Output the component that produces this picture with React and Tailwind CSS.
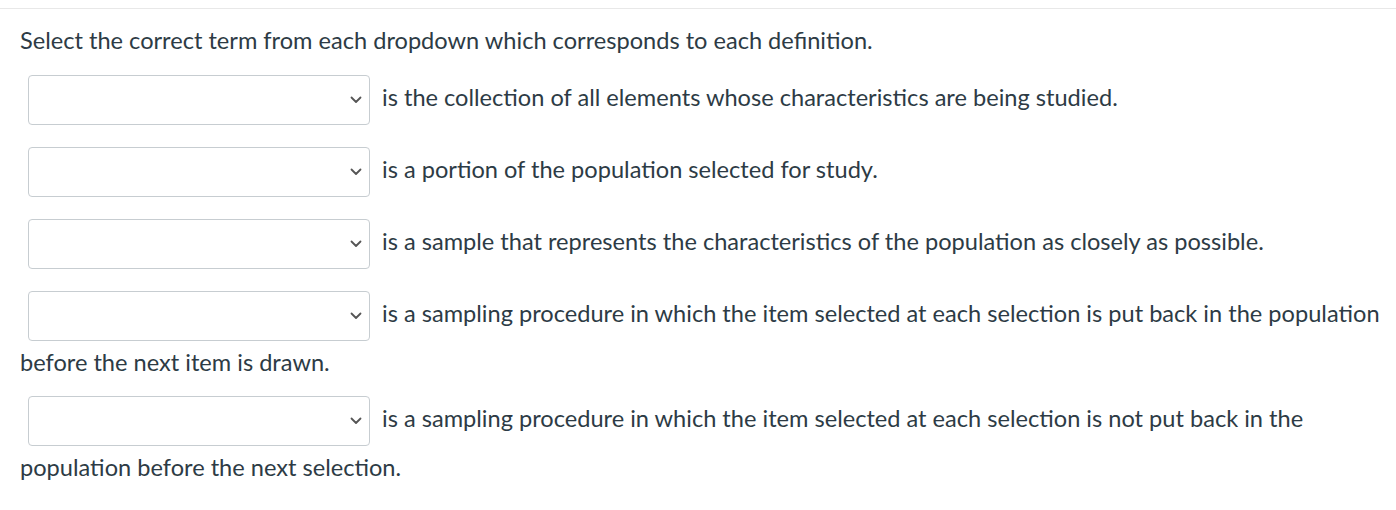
import React from 'react';

const rows = [
    'is the collection of all elements whose characteristics are being studied.',
    'is a portion of the population selected for study.',
    'is a sample that represents the characteristics of the population as closely as possible.',
    'is a sampling procedure in which the item selected at each selection is put back in the population before the next item is drawn.',
    'is a sampling procedure in which the item selected at each selection is not put back in the population before the next selection.',
];

const Dropdown = () => (
    <span className="relative inline-block align-middle my-[5px] ml-2 mr-3">
        <select
            defaultValue=""
            className="block w-[342px] h-[50px] appearance-none bg-white border border-[#c7cdd1] rounded-[4px] pl-3 pr-8 text-[#2d3b45] outline-none"
        >
            <option value=""></option>
            <option value="population">population</option>
            <option value="sample">sample</option>
            <option value="representative">representative sample</option>
            <option value="with">sampling with replacement</option>
            <option value="without">sampling without replacement</option>
        </select>
        <svg
            className="pointer-events-none absolute right-[8px] top-1/2 -translate-y-1/2"
            width="12"
            height="8"
            viewBox="0 0 12 8"
            fill="none"
        >
            <path d="M1.5 1.5 L6 6 L10.5 1.5" stroke="#555" strokeWidth="1.8" strokeLinecap="round" strokeLinejoin="round" />
        </svg>
    </span>
);

const App = () => {
    return (
        <div className="min-h-screen bg-white pt-2 font-['Lato','Open_Sans',sans-serif] text-[#2d3b45]">
            <div className="border-t border-[#e8e8e8] pl-5 pr-0 pt-[15px] text-[23.6px] leading-[33px]">
                <p className="mb-[13px]">Select the correct term from each dropdown which corresponds to each definition.</p>
                {rows.map((text, i) => (
                    <p key={i} className="mb-3">
                        <Dropdown />
                        {text}
                    </p>
                ))}
            </div>
        </div>
    );
};

export default App;
